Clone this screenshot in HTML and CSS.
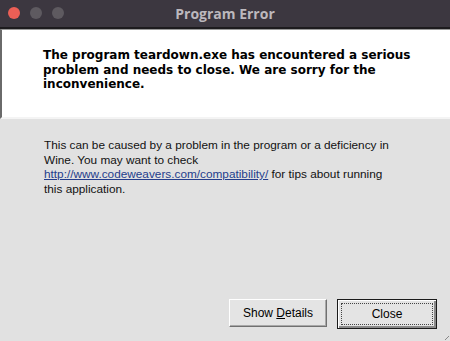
FILE: index.html
```html
<!DOCTYPE html>
<html lang="en">
<head>
    <meta charset="UTF-8">
    <title>Program Error</title>
    <link rel="stylesheet" href="styles.css">
</head>
<body>
    <div class="window">
        <div class="titlebar">
            <div class="lights">
                <span class="light close-light"></span>
                <span class="light"></span>
                <span class="light"></span>
            </div>
            <div class="title">Program Error</div>
        </div>

        <div class="header">
            <p>The program teardown.exe has encountered a serious problem and needs to close. We are sorry for the inconvenience.</p>
        </div>

        <div class="content">
            <p>This can be caused by a problem in the program or a deficiency in Wine. You may want to check <a href="#">http://www.codeweavers.com/compatibility/</a> for tips about running this application.</p>

            <div class="buttons">
                <button class="btn">Show <u>D</u>etails</button>
                <button class="btn default"><span class="focus">Close</span></button>
            </div>
            <div class="grip"></div>
        </div>
    </div>
</body>
</html>
```

FILE: styles.css
```css
html, body {
    margin: 0;
    padding: 0;
}
body {
    width: 450px;
    height: 341px;
    overflow: hidden;
    font-family: "Liberation Sans", Arial, sans-serif;
}
.window {
    display: flex;
    flex-direction: column;
    height: 341px;
    background-color: #e1e1e1;
}
.titlebar {
    position: relative;
    height: 27px;
    background-color: #3c3740;
    border-bottom: 2px solid #1d1b1e;
    display: flex;
    align-items: center;
    justify-content: center;
}
.lights {
    position: absolute;
    left: 8px;
    top: 7px;
    display: flex;
    gap: 10px;
}
.light {
    width: 12px;
    height: 12px;
    border-radius: 50%;
    background-color: #5e5a60;
}
.close-light {
    background-color: #ec5f56;
}
.title {
    font-family: "Open Sans", sans-serif;
    font-weight: bold;
    font-size: 14px;
    color: #bcb8bd;
}
.header {
    height: 90px;
    background-color: #fff;
    border-left: 2px solid #6a6a6a;
    border-top: 1px solid #9a9a9a;
    border-bottom: 2px solid #f4f4f4;
    box-sizing: border-box;
    padding: 18px 20px 0 41px;
}
.header p {
    margin: 0;
    font-family: "DejaVu Sans", sans-serif;
    font-weight: bold;
    font-size: 12px;
    line-height: 14.5px;
    color: #000;
}
.content {
    position: relative;
    flex: 1;
    display: flex;
    flex-direction: column;
    padding: 19px 13px 12px 44px;
}
.content p {
    margin: 0;
    font-size: 11.8px;
    line-height: 14.5px;
    color: #111;
    padding-right: 40px;
}
.content a {
    color: #243d8c;
}
.buttons {
    margin-top: auto;
    display: flex;
    justify-content: flex-end;
    gap: 10px;
}
.btn {
    width: 98px;
    height: 28px;
    padding: 0;
    font-family: "Liberation Sans", Arial, sans-serif;
    font-size: 12px;
    color: #000;
    background-color: #e4e4e4;
    border: 1px solid;
    border-color: #fff #707070 #707070 #fff;
    box-shadow: inset -1px -1px 0 #a8a8a8;
}
.btn.default {
    width: 100px;
    height: 30px;
    border: 1px solid #1a1a1a;
    box-shadow: inset 1px 1px 0 #fff, inset -2px -2px 0 #8a8a8a;
    padding: 3px;
}
.focus {
    display: flex;
    height: 100%;
    align-items: center;
    justify-content: center;
    border: 1px dotted #444;
    box-sizing: border-box;
}
.grip {
    position: absolute;
    right: 1px;
    bottom: 1px;
    width: 6px;
    height: 6px;
    background: linear-gradient(135deg, transparent 60%, #888 60%, #888 70%, transparent 70%);
}
```
